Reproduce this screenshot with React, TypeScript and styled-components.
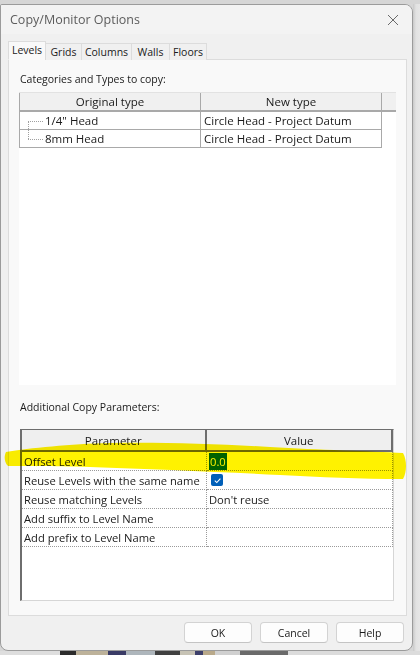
import styled, { createGlobalStyle } from "styled-components";

const GlobalStyle = createGlobalStyle`
  html, body {
    margin: 0;
    padding: 0;
    background: #d6d6d6;
  }
  * {
    box-sizing: border-box;
  }
`;

const FONT = `"Open Sans", "Noto Sans", sans-serif`;

const StyledPage = styled.div`
  position: relative;
  width: 420px;
  height: 655px;
  overflow: hidden;
  display: flex;
  flex-direction: column;
  background: #d6d6d6;
  font-family: ${FONT};
  isolation: isolate;
`;

const StyledTopStrip = styled.div`
  height: 4px;
  flex: none;
`;

const StyledMiddle = styled.div`
  display: flex;
  flex: none;
  height: 647px;
`;

const StyledGutter = styled.div`
  flex: 1;
  background: linear-gradient(to right, #c9c9c9, #e2e2e2 3px, #e6e6e6);
`;

const StyledBottomStrip = styled.div`
  flex: 1;
  background: linear-gradient(
    to right,
    #dedede 0 60px,
    #2c2c2c 60px 76px,
    #bdb29a 76px 108px,
    #3a3b66 108px 126px,
    #aeb6bc 126px 155px,
    #404040 155px 180px,
    #c7c3b5 180px 195px,
    #3d3f6a 195px 203px,
    #b9a98a 203px 215px,
    #d0d0d0 215px 240px,
    #6a6a6a 240px 288px,
    #dcdcdc 288px
  );
`;

const StyledDialog = styled.div`
  width: 413px;
  height: 647px;
  display: flex;
  flex-direction: column;
  background: #f0f0f0;
  border: 1px solid #9b9b9b;
  border-radius: 2px 8px 8px 8px;
  overflow: hidden;
`;

const StyledTitleBar = styled.div`
  height: 29px;
  flex: none;
  display: flex;
  align-items: center;
  justify-content: space-between;
  padding: 0 9px 0 9px;
  background: #f3f3f3;
  color: #5c5c5c;
  font-size: 12.5px;
`;

const StyledClose = styled.svg`
  width: 12px;
  height: 12px;
  margin-right: 4px;
`;

const StyledBody = styled.div`
  flex: 1;
  display: flex;
  flex-direction: column;
  padding: 7px 5px 0 7px;
`;

const StyledTabs = styled.div`
  display: flex;
  align-items: flex-end;
  height: 19px;
  padding-left: 1px;
  margin-bottom: -1px;
  position: relative;
  z-index: 1;
`;

const StyledTab = styled.div<{ $active?: boolean; $width: number }>`
  width: ${(p) => p.$width}px;
  height: ${(p) => (p.$active ? 19 : 17)}px;
  display: flex;
  align-items: center;
  justify-content: center;
  font-size: 10.5px;
  color: #1a1a1a;
  background: ${(p) => (p.$active ? "#f9f9f9" : "#f0f0f0")};
  border: 1px solid #dcdcdc;
  border-bottom: ${(p) => (p.$active ? "1px solid #f9f9f9" : "none")};
  margin-left: -1px;
  padding-bottom: ${(p) => (p.$active ? 1 : 0)}px;
`;

const StyledPanel = styled.div`
  height: 557px;
  flex: none;
  background: #f9f9f9;
  border: 1px solid #dcdcdc;
  display: flex;
  flex-direction: column;
  padding: 0 11px 0 11px;
`;

const StyledSectionLabel = styled.div<{ $top: number }>`
  font-size: 10.5px;
  color: #1a1a1a;
  margin-top: ${(p) => p.$top}px;
  height: 14px;
  line-height: 14px;
`;

const StyledList = styled.div`
  margin-top: 6px;
  margin-left: -1px;
  width: 377px;
  height: 293px;
  flex: none;
  background: #ffffff;
  display: flex;
  flex-direction: column;
`;

const StyledListHeader = styled.div`
  display: flex;
  height: 20px;
  background: #f0f0f0;
  border-bottom: 2px solid #a9a9a9;
  border-top: 1px solid #e2e2e2;
`;

const StyledListHeaderCell = styled.div<{ $width: number; $last?: boolean }>`
  width: ${(p) => p.$width}px;
  display: flex;
  align-items: center;
  justify-content: center;
  font-size: 11.5px;
  color: #1a1a1a;
  border-left: 1px solid #a9a9a9;
  border-right: ${(p) => (p.$last ? "1px solid #a9a9a9" : "none")};
`;

const StyledListRow = styled.div`
  display: flex;
  height: 18px;
`;

const StyledListCell = styled.div<{ $width: number; $last?: boolean }>`
  width: ${(p) => p.$width}px;
  display: flex;
  align-items: center;
  font-size: 11.5px;
  color: #1a1a1a;
  border-left: 1px solid #a9a9a9;
  border-right: ${(p) => (p.$last ? "1px solid #a9a9a9" : "none")};
  border-bottom: 1px solid #a9a9a9;
  padding-left: 3px;
  white-space: nowrap;
`;

const StyledTreeGuide = styled.span<{ $first?: boolean }>`
  position: relative;
  width: 16px;
  height: 18px;
  margin-left: 5px;
  margin-right: 1px;
  flex: none;

  &::before {
    content: "";
    position: absolute;
    left: 0;
    top: ${(p) => (p.$first ? "9px" : "-1px")};
    height: 10px;
    border-left: 1px dotted #a0a0a0;
  }

  &::after {
    content: "";
    position: absolute;
    left: 0;
    top: 9px;
    width: 15px;
    border-top: 1px dotted #a0a0a0;
  }
`;

const StyledGrid = styled.div`
  margin-top: 15px;
  width: 374px;
  height: 172px;
  flex: none;
  background: #ffffff;
  border-left: 2px solid #6e6e6e;
  border-top: 1px solid #6e6e6e;
  border-right: 1px solid #d6d6d6;
  border-bottom: 1px solid #d6d6d6;
  display: flex;
  flex-direction: column;
`;

const StyledGridHeader = styled.div`
  display: flex;
  height: 22px;
  background: #efefef;
  border-bottom: 2px solid #6e6e6e;
`;

const StyledGridHeaderCell = styled.div<{ $width: number }>`
  width: ${(p) => p.$width}px;
  display: flex;
  align-items: center;
  justify-content: center;
  font-size: 11.5px;
  color: #1a1a1a;
  border-right: 2px solid #6e6e6e;
  padding-top: 1px;
`;

const StyledGridRow = styled.div`
  display: flex;
  height: 19px;
`;

const StyledGridCell = styled.div<{ $width: number }>`
  width: ${(p) => p.$width}px;
  display: flex;
  align-items: center;
  font-size: 11.2px;
  color: #1a1a1a;
  border-right: 1px dotted #9a9a9a;
  border-bottom: 1px dotted #9a9a9a;
  padding-left: 2px;
  white-space: nowrap;
`;

const StyledSelectedValue = styled.span`
  background: #0066d6;
  color: #ffffff;
  padding: 1px 1px;
  line-height: 15px;
`;

const StyledCheckbox = styled.span`
  width: 12px;
  height: 12px;
  border-radius: 2px;
  background: #005fb8;
  display: flex;
  align-items: center;
  justify-content: center;
  margin-left: 2px;
`;

const StyledFooter = styled.div`
  display: flex;
  justify-content: flex-end;
  gap: 8px;
  padding: 6px 3px 0 0;
`;

const StyledButton = styled.button`
  width: 68px;
  height: 21px;
  background: #fdfdfd;
  border: 1px solid #d3d3d3;
  border-bottom-color: #c4c4c4;
  border-radius: 4px;
  font-family: ${FONT};
  font-size: 10.5px;
  color: #1a1a1a;
  padding: 0;
`;

const StyledHighlight = styled.svg`
  position: absolute;
  left: 0;
  top: 0;
  width: 420px;
  height: 655px;
  pointer-events: none;
  mix-blend-mode: multiply;
`;

const TABS = [
  { label: "Levels", width: 38, active: true },
  { label: "Grids", width: 37 },
  { label: "Columns", width: 51 },
  { label: "Walls", width: 39 },
  { label: "Floors", width: 38 },
];

const TYPES = [
  { original: "1/4\" Head", next: "Circle Head - Project Datum" },
  { original: "8mm Head", next: "Circle Head - Project Datum" },
];

const PARAMS = [
  "Offset Level",
  "Reuse Levels with the same name",
  "Reuse matching Levels",
  "Add suffix to Level Name",
  "Add prefix to Level Name",
];

const renderValue = (index: number) => {
  if (index === 0) return <StyledSelectedValue>0.0</StyledSelectedValue>;
  if (index === 1)
    return (
      <StyledCheckbox>
        <svg width="9" height="9" viewBox="0 0 10 10">
          <path d="M2 5.2 L4.2 7.3 L8.2 2.8" fill="none" stroke="#fff" strokeWidth="1.2" />
        </svg>
      </StyledCheckbox>
    );
  if (index === 2) return "Don't reuse";
  return null;
};

const App = () => {
  return (
    <StyledPage>
      <GlobalStyle />
      <StyledTopStrip />
      <StyledMiddle>
        <StyledDialog>
          <StyledTitleBar>
            <span>Copy/Monitor Options</span>
            <StyledClose viewBox="0 0 12 12">
              <path d="M1 1 L11 11 M11 1 L1 11" stroke="#6a6a6a" strokeWidth="1" />
            </StyledClose>
          </StyledTitleBar>
          <StyledBody>
            <StyledTabs>
              {TABS.map((tab) => (
                <StyledTab key={tab.label} $active={tab.active} $width={tab.width}>
                  {tab.label}
                </StyledTab>
              ))}
            </StyledTabs>
            <StyledPanel>
              <StyledSectionLabel $top={12}>Categories and Types to copy:</StyledSectionLabel>
              <StyledList>
                <StyledListHeader>
                  <StyledListHeaderCell $width={181}>Original type</StyledListHeaderCell>
                  <StyledListHeaderCell $width={182} $last>
                    New type
                  </StyledListHeaderCell>
                </StyledListHeader>
                {TYPES.map((row, i) => (
                  <StyledListRow key={row.original}>
                    <StyledListCell $width={181}>
                      <StyledTreeGuide $first={i === 0} />
                      {row.original}
                    </StyledListCell>
                    <StyledListCell $width={182} $last>
                      {row.next}
                    </StyledListCell>
                  </StyledListRow>
                ))}
              </StyledList>
              <StyledSectionLabel $top={15}>Additional Copy Parameters:</StyledSectionLabel>
              <StyledGrid>
                <StyledGridHeader>
                  <StyledGridHeaderCell $width={185}>Parameter</StyledGridHeaderCell>
                  <StyledGridHeaderCell $width={187}>Value</StyledGridHeaderCell>
                </StyledGridHeader>
                {PARAMS.map((name, i) => (
                  <StyledGridRow key={name}>
                    <StyledGridCell $width={185}>{name}</StyledGridCell>
                    <StyledGridCell $width={186}>{renderValue(i)}</StyledGridCell>
                  </StyledGridRow>
                ))}
              </StyledGrid>
            </StyledPanel>
            <StyledFooter>
              <StyledButton>OK</StyledButton>
              <StyledButton>Cancel</StyledButton>
              <StyledButton>Help</StyledButton>
            </StyledFooter>
          </StyledBody>
        </StyledDialog>
        <StyledGutter />
      </StyledMiddle>
      <StyledBottomStrip />
      <StyledHighlight viewBox="0 0 420 655">
        <path
          d="M6 452 C 30 448, 70 444, 110 443 C 160 442, 220 444, 270 447 C 320 450, 370 451, 403 453 C 407 460, 407 472, 403 479 C 360 479, 320 477, 280 475 C 220 472, 150 469, 90 467 C 50 466, 25 466, 8 466 C 4 462, 4 456, 6 452 Z"
          fill="#fff200"
        />
      </StyledHighlight>
    </StyledPage>
  );
};

export default App;
